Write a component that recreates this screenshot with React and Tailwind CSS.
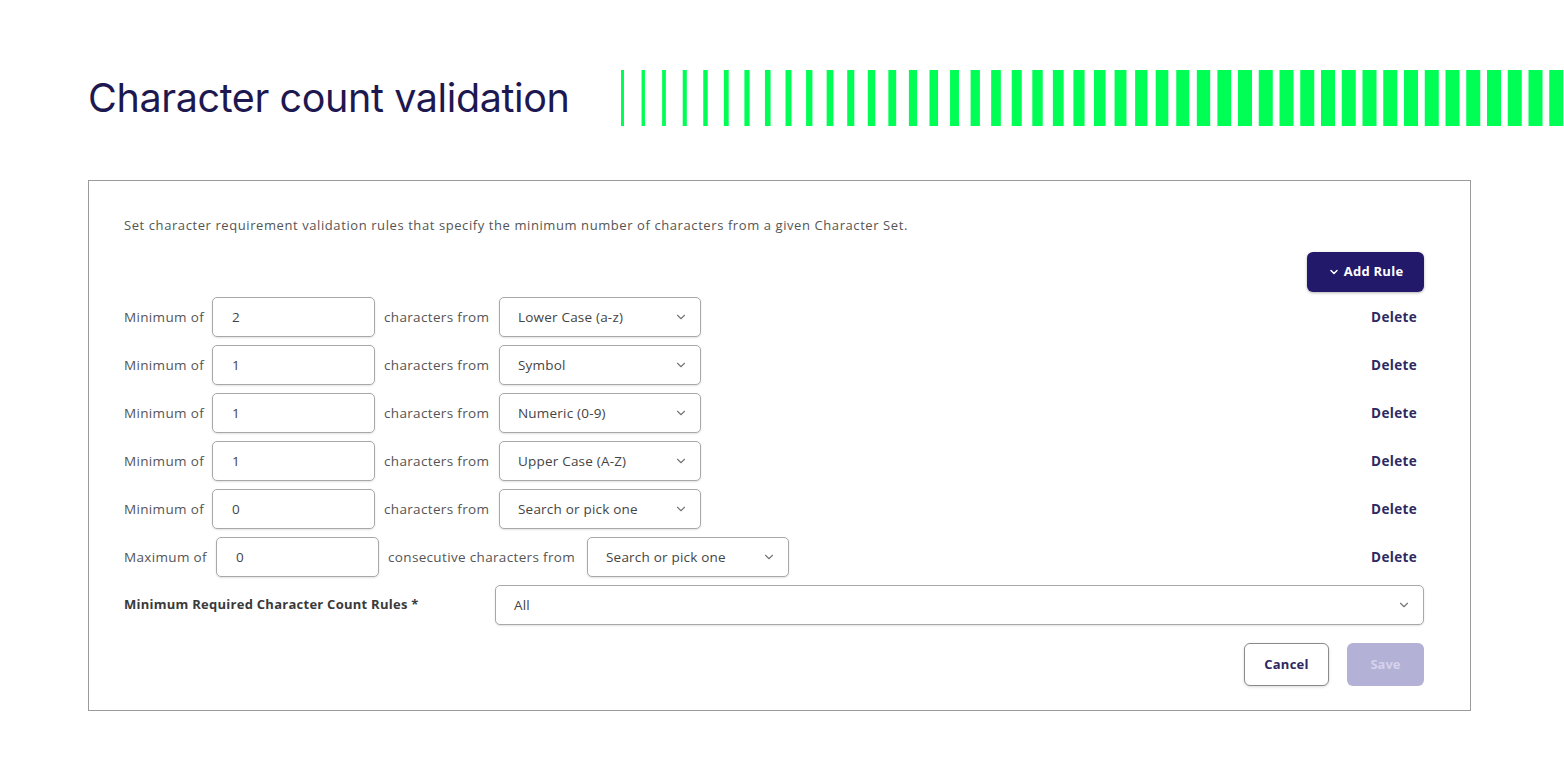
import { ChevronDown } from 'lucide-react';

const ROWS = [
  { label: 'Minimum of', value: '2', mid: 'characters from', pick: 'Lower Case (a-z)' },
  { label: 'Minimum of', value: '1', mid: 'characters from', pick: 'Symbol' },
  { label: 'Minimum of', value: '1', mid: 'characters from', pick: 'Numeric (0-9)' },
  { label: 'Minimum of', value: '1', mid: 'characters from', pick: 'Upper Case (A-Z)' },
  { label: 'Minimum of', value: '0', mid: 'characters from', pick: 'Search or pick one' },
  { label: 'Maximum of', value: '0', mid: 'consecutive characters from', pick: 'Search or pick one', max: true },
];

// bars grow wider toward the right edge
const BARS = Array.from({ length: 46 }, (_, i) => {
  const w = i < 30 ? 3 + i * 0.37 : 14;
  const cx = 12.5 + i * 20.75;
  return { x: cx - w / 2, w };
});

function Barcode() {
  return (
    <svg width="954" height="56" viewBox="0 0 954 56" className="block shrink-0">
      {BARS.map((b, i) => (
        <rect key={i} x={b.x} y="0" width={b.w} height="56" fill="#00ff55" />
      ))}
    </svg>
  );
}

function Select({ text, className = '' }) {
  return (
    <div className={`h-10 flex items-center justify-between pl-[18px] pr-[12px] border border-[#a8a8a8] rounded-[5px] shadow-[0_1px_2px_rgba(0,0,0,0.12)] bg-white ${className}`}>
      <span className="text-[13.5px] tracking-[0.015em] text-[#444]">{text}</span>
      <ChevronDown size={14} strokeWidth={2} className="text-[#777]" />
    </div>
  );
}

export default function App() {
  return (
    <div className="w-[1564px] h-[782px] bg-white overflow-hidden font-['Open_Sans',sans-serif]">
      {/* Header */}
      <div className="flex items-center pl-[88px] mt-[70px] h-[56px]">
        <h1 className="w-[522px] shrink-0 pt-[2px] text-[39.5px] leading-none text-[#1e1850] font-['Inter',sans-serif] tracking-[-0.01em]">
          Character count validation
        </h1>
        <Barcode />
      </div>

      {/* Card */}
      <div className="ml-[88px] mt-[54px] w-[1383px] h-[531px] border border-[#9b9b9b] pl-[35px] pr-[46px] pt-[35px]">
        <p className="text-[13px] leading-[18px] tracking-[0.045em] text-[#555]">
          Set character requirement validation rules that specify the minimum number of characters from a given Character Set.
        </p>

        <div className="flex justify-end mt-[18px]">
          <button className="w-[117px] h-10 flex items-center justify-center gap-1 bg-[#22196b] rounded-[6px] text-white text-[13px] font-bold tracking-[0.02em] shadow-[0_1px_3px_rgba(0,0,0,0.3)]">
            <ChevronDown size={12} strokeWidth={3} />
            Add Rule
          </button>
        </div>

        <div className="flex flex-col gap-[8px] mt-[5px]">
          {ROWS.map((r, i) => (
            <div key={i} className="flex items-center h-10 gap-[9px] text-[13.5px] tracking-[0.025em] text-[#555]">
              <span className={r.max ? 'w-[83px] shrink-0 whitespace-nowrap' : 'w-[79px] shrink-0 whitespace-nowrap'}>{r.label}</span>
              <div className="w-[163px] h-10 flex items-center pl-[19px] border border-[#a8a8a8] rounded-[5px] shadow-[0_1px_2px_rgba(0,0,0,0.12)] text-[#444]">
                {r.value}
              </div>
              <span className={r.max ? 'w-[190px] shrink-0 whitespace-nowrap' : 'w-[106px] shrink-0 whitespace-nowrap'}>{r.mid}</span>
              <Select text={r.pick} className="w-[202px]" />
              <span className="ml-auto mr-[7px] font-bold text-[#2d2862]">Delete</span>
            </div>
          ))}

          <div className="flex items-center h-10">
            <span className="w-[371px] shrink-0 text-[13px] tracking-[0.02em] font-bold text-[#3a3a3a]">
              Minimum Required Character Count Rules *
            </span>
            <Select text="All" className="flex-1" />
          </div>
        </div>

        <div className="flex justify-end gap-[18px] mt-[18px]">
          <button className="w-[85px] h-[43px] border-[1.5px] border-[#8a8a8a] rounded-[6px] bg-white text-[13px] font-bold tracking-[0.02em] text-[#2d2862] shadow-[0_1px_3px_rgba(0,0,0,0.15)]">
            Cancel
          </button>
          <button className="w-[77px] h-[43px] rounded-[6px] bg-[#b4b1d6] text-[13px] font-bold text-[#d4d2ec]">
            Save
          </button>
        </div>
      </div>
    </div>
  );
}
